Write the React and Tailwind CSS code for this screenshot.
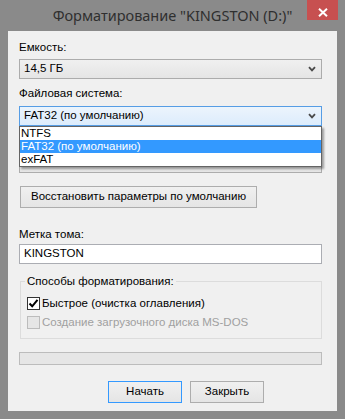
import React from 'react';

const Chevron = () => (
  <svg width="8" height="6" viewBox="0 0 8 6" className="shrink-0">
    <path d="M1 1.2 L4 4.4 L7 1.2" fill="none" stroke="#4a4a4a" strokeWidth="1.8" />
  </svg>
);

const Select = ({ value, focused }) => (
  <div
    className={
      'h-[20px] w-[303px] flex items-center justify-between pl-[4px] pr-[5px] border ' +
      (focused
        ? 'border-[#569de5] bg-gradient-to-b from-[#ecf4fc] to-[#dcecfc]'
        : 'border-[#acacac] bg-gradient-to-b from-[#f0f0f0] to-[#e5e5e5]')
    }
  >
    <span>{value}</span>
    <Chevron />
  </div>
);

const Label = ({ children, className = '' }) => (
  <div className={'h-[15px] leading-[15px] ' + className}>{children}</div>
);

const Button = ({ children, className = '', primary }) => (
  <div
    className={
      'h-[22px] flex items-center justify-center whitespace-nowrap border bg-gradient-to-b from-[#f0f0f0] to-[#e5e5e5] ' +
      (primary ? 'border-[#3399ff] ' : 'border-[#adadad] ') +
      className
    }
  >
    {children}
  </div>
);

export default function App() {
  const fsOptions = ['NTFS', 'FAT32 (по умолчанию)', 'exFAT'];

  return (
    <div className="w-[345px] h-[419px] bg-[#8a8a8a] flex flex-col font-['Liberation_Sans',Arial,sans-serif] text-[11.5px] text-black">
      {/* title bar */}
      <div className="h-[31px] relative flex items-center justify-center">
        <span className="font-['Noto_Sans',sans-serif] text-[14.5px] leading-[20px] text-[#2f2f2f] mt-[-1px]">
          Форматирование "KINGSTON (D:)"
        </span>
        <div className="absolute right-[7px] top-0 w-[31px] h-[20px] bg-[#c75050] flex items-center justify-center">
          <svg width="10" height="9" viewBox="0 0 10 9" className="mt-[4px]">
            <path d="M1 0.8 L9 8.2 M9 0.8 L1 8.2" stroke="#fff" strokeWidth="2" />
          </svg>
        </div>
      </div>

      {/* client area */}
      <div className="mx-[8px] h-[380px] bg-[#f0f0f0] relative pl-[11px] pt-[9px] flex flex-col">
        <Label>Емкость:</Label>
        <div className="mt-[4px]">
          <Select value="14,5 ГБ" />
        </div>

        <Label className="mt-[7px]">Файловая система:</Label>
        <div className="mt-[5px]">
          <Select value="FAT32 (по умолчанию)" focused />
        </div>

        {/* allocation size row, covered by the open list */}
        <Label className="mt-[7px]" />
        <div className="mt-[5px] h-[20px] w-[303px] border border-[#acacac] bg-gradient-to-b from-[#f0f0f0] to-[#e5e5e5]" />

        <Button className="mt-[13px] ml-[1px] w-[237px] h-[20px]">
          Восстановить параметры по умолчанию
        </Button>

        <Label className="mt-[19px]">Метка тома:</Label>
        <div className="mt-[2px] h-[20px] w-[303px] bg-white border border-[#abadb3] flex items-center pl-[4px]">
          KINGSTON
        </div>

        <fieldset className="mt-[10px] ml-[1px] w-[302px] border border-[#dcdcdc] pl-[6px] pb-[9px]">
          <legend className="ml-[-2px] px-[2px] leading-[15px]">Способы форматирования:</legend>
          <div className="mt-[8px] flex items-center gap-[2px] h-[13px]">
            <div className="w-[13px] h-[13px] bg-white border border-[#333] flex items-center justify-center">
              <svg width="11" height="11" viewBox="0 0 11 11">
                <path d="M1.5 5.5 L4.2 8.3 L9.5 1.8" fill="none" stroke="#000" strokeWidth="2" />
              </svg>
            </div>
            <span>Быстрое (очистка оглавления)</span>
          </div>
          <div className="mt-[6px] flex items-center gap-[2px] h-[13px] text-[#a0a0a0]">
            <div className="w-[13px] h-[13px] bg-[#e6e6e6] border border-[#bcbcbc]" />
            <span>Создание загрузочного диска MS-DOS</span>
          </div>
        </fieldset>

        <div className="mt-[13px] h-[13px] w-[303px] bg-[#e6e6e6] border border-[#bcbcbc]" />

        <div className="mt-[16px] ml-[89px] flex gap-[8px]">
          <Button primary className="w-[74px]">Начать</Button>
          <Button className="w-[74px]">Закрыть</Button>
        </div>

        {/* opened file-system list */}
        <div className="absolute left-[11px] top-[95px] w-[303px] h-[41px] bg-white border border-[#646464] shadow-[2px_2px_2px_rgba(0,0,0,0.35)] flex flex-col">
          {fsOptions.map((o, i) => (
            <div
              key={o}
              className={
                'pl-[1px] leading-[13px] h-[13px] ' +
                (i === 1 ? 'bg-[#3399ff] text-white' : '')
              }
            >
              {o}
            </div>
          ))}
        </div>
      </div>
    </div>
  );
}
